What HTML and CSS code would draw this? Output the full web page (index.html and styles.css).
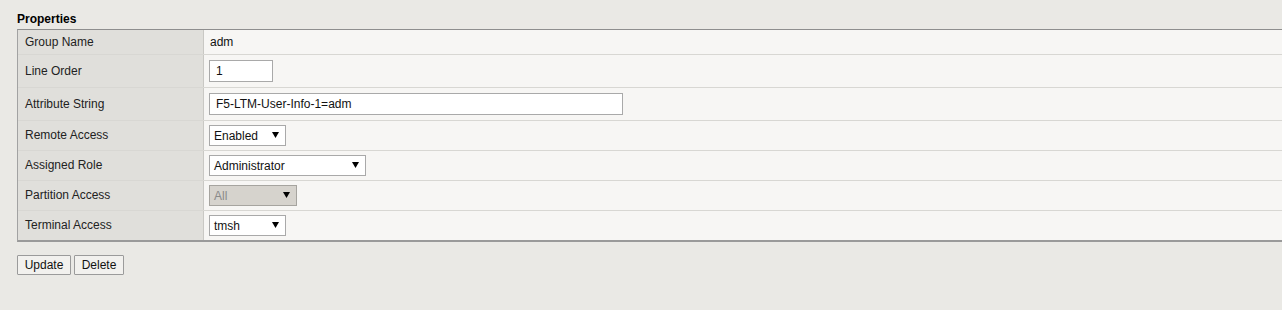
FILE: index.html
```
<!DOCTYPE html>
<html>
<head>
<meta charset="utf-8">
<link rel="stylesheet" href="styles.css">
</head>
<body>
<div class="page">
  <h2 class="title">Properties</h2>
  <div class="props">
    <div class="row r1"><div class="label">Group Name</div><div class="value"><span class="plain">adm</span></div></div>
    <div class="row r2"><div class="label">Line Order</div><div class="value"><input class="text short" type="text" value="1"></div></div>
    <div class="row r2"><div class="label">Attribute String</div><div class="value"><input class="text long" type="text" value="F5-LTM-User-Info-1=adm"></div></div>
    <div class="row r3"><div class="label">Remote Access</div><div class="value">
      <span class="sel w76"><span class="seltext">Enabled</span><svg class="arrow" width="7" height="6" viewBox="0 0 7 6"><polygon points="0,0 7,0 3.5,6" fill="#000"/></svg></span>
    </div></div>
    <div class="row r3"><div class="label">Assigned Role</div><div class="value">
      <span class="sel w156"><span class="seltext">Administrator</span><svg class="arrow" width="7" height="6" viewBox="0 0 7 6"><polygon points="0,0 7,0 3.5,6" fill="#000"/></svg></span>
    </div></div>
    <div class="row r3"><div class="label">Partition Access</div><div class="value">
      <span class="sel w87 disabled"><span class="seltext">All</span><svg class="arrow" width="7" height="6" viewBox="0 0 7 6"><polygon points="0,0 7,0 3.5,6" fill="#000"/></svg></span>
    </div></div>
    <div class="row r3 last"><div class="label">Terminal Access</div><div class="value">
      <span class="sel w76"><span class="seltext">tmsh</span><svg class="arrow" width="7" height="6" viewBox="0 0 7 6"><polygon points="0,0 7,0 3.5,6" fill="#000"/></svg></span>
    </div></div>
  </div>
  <div class="buttons">
    <button class="btn b-update" type="button">Update</button>
    <button class="btn b-delete" type="button">Delete</button>
  </div>
</div>
</body>
</html>
```
FILE: styles.css
```
html, body {
  margin: 0;
  padding: 0;
  background: #eae9e5;
  overflow: hidden;
}
body {
  font-family: "Liberation Sans", Arial, sans-serif;
  font-size: 12px;
  color: #1a1a1a;
}
.page {
  padding: 12px 0 0 17px;
}
.title {
  margin: 0 0 3px 0;
  font-size: 12px;
  line-height: 14px;
  font-weight: bold;
  color: #000;
}
.props {
  width: 1280px;
  border-top: 1px solid #8e8e8e;
  border-left: 1px solid #a2a2a2;
  border-bottom: 2px solid #9a9a9a;
  background: #f7f6f4;
}
.row {
  display: flex;
  border-bottom: 1px solid #d8d7d3;
}
.row.last {
  border-bottom: none;
}
.r1 { height: 24px; }
.r2 { height: 32px; }
.r3 { height: 29px; }
.label {
  width: 178px;
  flex: none;
  padding-left: 7px;
  padding-bottom: 1px;
  box-sizing: content-box;
  background: #e0dfdb;
  border-right: 1px solid #c9c8c4;
  display: flex;
  align-items: center;
  color: #222;
}
.value {
  flex: 1;
  display: flex;
  align-items: center;
  padding-left: 5px;
}
.plain {
  padding-left: 1px;
  color: #111;
}
.text {
  box-sizing: border-box;
  height: 22px;
  border: 1px solid #a9a9a9;
  background: #fff;
  font-family: "Liberation Sans", Arial, sans-serif;
  font-size: 12px;
  color: #111;
  padding: 0 6px;
  margin: 0;
  outline: none;
}
.short { width: 64px; }
.long { width: 414px; }
.sel {
  box-sizing: border-box;
  position: relative;
  display: flex;
  align-items: center;
  height: 21px;
  border: 1px solid #a9a9a9;
  background: #fff;
  padding-left: 4px;
  color: #111;
}
.w76 { width: 77px; }
.w156 { width: 157px; }
.w87 { width: 88px; }
.sel.disabled {
  background: #d6d3cd;
  color: #8a8a8a;
  border-color: #a6a49f;
}
.arrow {
  position: absolute;
  right: 6px;
  top: 6px;
}
.buttons {
  display: flex;
  gap: 3px;
  margin-top: 13px;
}
.btn {
  box-sizing: border-box;
  height: 20px;
  margin: 0;
  padding: 0;
  border: 1px solid #9b9b9b;
  border-radius: 1px;
  background: #f2f1ee;
  font-family: "Liberation Sans", Arial, sans-serif;
  font-size: 12px;
  color: #111;
}
.b-update { width: 54px; }
.b-delete { width: 50px; }
```
